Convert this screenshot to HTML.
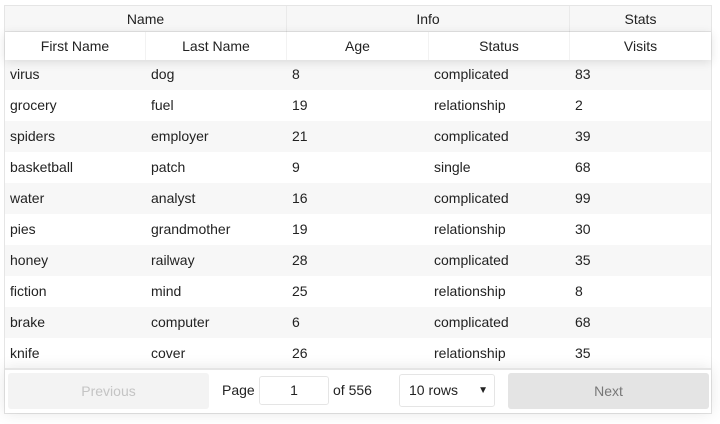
<!DOCTYPE html>
<html><head><style>
*{box-sizing:border-box;margin:0;padding:0}
body{width:720px;height:424px;background:#fff;font-family:"Liberation Sans",Arial,sans-serif;font-size:14px;color:#222;position:relative;overflow:hidden}
.t{position:absolute;left:4px;top:5px;width:708px;height:409px;border:1px solid rgba(0,0,0,.1)}
.g{position:absolute;left:0;top:0;width:706px;height:26px;background:#f7f7f7;border-bottom:1px solid rgba(0,0,0,.08)}
.c{position:absolute;text-align:center;line-height:26px}
.h{position:absolute;left:0;top:26px;width:706px;height:28px;background:#fff;box-shadow:0 2px 10px 0 rgba(0,0,0,.12);z-index:2}
.h .c{line-height:28px;border-right:1px solid rgba(0,0,0,.05);height:28px}
.g .c{border-right:1px solid rgba(0,0,0,.05);height:26px}
.r{position:absolute;left:0;width:706px;height:31px;line-height:31px}
.r.o{background:#f7f7f7}
.r span{position:absolute;top:0;height:31px}
.p{position:absolute;left:0;top:362px;width:706px;height:45px;border-top:2px solid rgba(0,0,0,.1);box-shadow:0 0 15px 0 rgba(0,0,0,.1)}
.btn{position:absolute;top:3px;height:36px;border-radius:3px;text-align:center;line-height:36px;font-size:14px}
</style></head><body>
<div class="t">
<div class="g">
<div class="c" style="left:0;width:282px">Name</div>
<div class="c" style="left:282px;width:283px">Info</div>
<div class="c" style="left:565px;width:141px;border:none">Stats</div>
</div>
<div class="h">
<div class="c" style="left:0;width:141px">First Name</div>
<div class="c" style="left:141px;width:141px">Last Name</div>
<div class="c" style="left:282px;width:142px">Age</div>
<div class="c" style="left:424px;width:141px">Status</div>
<div class="c" style="left:565px;width:141px;border:none">Visits</div>
</div>
<div class="p">
<div class="btn" style="left:3px;width:201px;background:#f3f3f3;color:#c4c4c4">Previous</div>
<div style="position:absolute;left:217px;top:0;line-height:40px">Page</div>
<div style="position:absolute;left:254px;top:6px;width:70px;height:29px;border:1px solid rgba(0,0,0,.1);border-radius:3px;text-align:center;line-height:27px">1</div>
<div style="position:absolute;left:328px;top:0;line-height:40px">of 556</div>
<div style="position:absolute;left:394px;top:4px;width:96px;height:33px;border:1px solid rgba(0,0,0,.1);border-radius:3px;line-height:31px;padding-left:9px">10 rows<span style="position:absolute;right:6px;font-size:10px">▼</span></div>
<div class="btn" style="left:503px;width:201px;background:#e4e4e4;color:#777">Next</div>
</div>
<div class="r o" style="top:53px"><span style="left:5px">virus</span><span style="left:146px">dog</span><span style="left:287px">8</span><span style="left:429px">complicated</span><span style="left:570px">83</span></div>
<div class="r" style="top:84px"><span style="left:5px">grocery</span><span style="left:146px">fuel</span><span style="left:287px">19</span><span style="left:429px">relationship</span><span style="left:570px">2</span></div>
<div class="r o" style="top:115px"><span style="left:5px">spiders</span><span style="left:146px">employer</span><span style="left:287px">21</span><span style="left:429px">complicated</span><span style="left:570px">39</span></div>
<div class="r" style="top:146px"><span style="left:5px">basketball</span><span style="left:146px">patch</span><span style="left:287px">9</span><span style="left:429px">single</span><span style="left:570px">68</span></div>
<div class="r o" style="top:177px"><span style="left:5px">water</span><span style="left:146px">analyst</span><span style="left:287px">16</span><span style="left:429px">complicated</span><span style="left:570px">99</span></div>
<div class="r" style="top:208px"><span style="left:5px">pies</span><span style="left:146px">grandmother</span><span style="left:287px">19</span><span style="left:429px">relationship</span><span style="left:570px">30</span></div>
<div class="r o" style="top:239px"><span style="left:5px">honey</span><span style="left:146px">railway</span><span style="left:287px">28</span><span style="left:429px">complicated</span><span style="left:570px">35</span></div>
<div class="r" style="top:270px"><span style="left:5px">fiction</span><span style="left:146px">mind</span><span style="left:287px">25</span><span style="left:429px">relationship</span><span style="left:570px">8</span></div>
<div class="r o" style="top:301px"><span style="left:5px">brake</span><span style="left:146px">computer</span><span style="left:287px">6</span><span style="left:429px">complicated</span><span style="left:570px">68</span></div>
<div class="r" style="top:332px"><span style="left:5px">knife</span><span style="left:146px">cover</span><span style="left:287px">26</span><span style="left:429px">relationship</span><span style="left:570px">35</span></div>
</div>
</body></html>
